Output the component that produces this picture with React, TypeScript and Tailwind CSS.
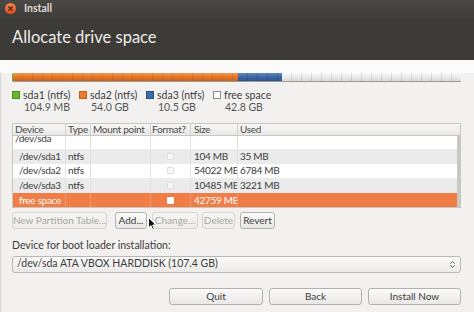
import { ChevronsUpDown, X } from "lucide-react";

const FONT = "font-['Lato','Noto_Sans',sans-serif]";

const legend = [
  { name: "sda1 (ntfs)", size: "104.9 MB", swatch: "bg-[#66b82f] border-[#4d8f20]" },
  { name: "sda2 (ntfs)", size: "54.0 GB", swatch: "bg-[#ec7c2c] border-[#c45e16]" },
  { name: "sda3 (ntfs)", size: "10.5 GB", swatch: "bg-[#3d6aa8] border-[#2a4f82]" },
  { name: "free space", size: "42.8 GB", swatch: "bg-white border-[#8a8a8a]" },
];

const rows = [
  { device: "/dev/sda1", type: "ntfs", size: "104 MB", used: "35 MB" },
  { device: "/dev/sda2", type: "ntfs", size: "54022 MB", used: "6784 MB" },
  { device: "/dev/sda3", type: "ntfs", size: "10485 MB", used: "3221 MB" },
];

const Btn = ({
  label,
  disabled,
  className,
}: {
  label: string;
  disabled?: boolean;
  className: string;
}) => (
  <button
    type="button"
    className={[
      "flex h-[17px] shrink-0 items-center justify-center whitespace-nowrap rounded-[3px] border bg-gradient-to-b text-[10px]",
      disabled
        ? "border-[#d6d4d2] from-[#f6f5f4] to-[#eeedec] text-[#a7a6a4]"
        : "border-[#b4b2af] from-[#fbfbfa] to-[#e8e7e5] text-[#3c3c3c]",
      className,
    ].join(" ")}
  >
    {label}
  </button>
);

const Cells = ({
  cols,
  line,
  align = "items-center",
}: {
  cols: React.ReactNode[];
  line: string;
  align?: string;
}) => {
  const widths = ["w-[53px]", "w-[25px]", "w-[60px]", "w-[40px]", "w-[47px]", "flex-1"];
  return (
    <>
      {cols.map((c, i) => (
        <div
          key={i}
          className={[
            "flex h-full shrink-0 overflow-hidden whitespace-nowrap",
            align,
            widths[i],
            i < 5 ? `border-r ${line}` : "",
          ].join(" ")}
        >
          {c}
        </div>
      ))}
    </>
  );
};

const Check = ({ on }: { on?: boolean }) => (
  <span className="flex w-full justify-center">
    {on ? (
      <span className="h-[7px] w-[7px] rounded-[1px] bg-white" />
    ) : (
      <span className="h-[7px] w-[7px] rounded-[1px] border border-[#e0dfdd] bg-[#f7f7f7]" />
    )}
  </span>
);

export default function App() {
  return (
    <div className={`h-[312px] w-[474px] overflow-hidden bg-[#fbfbfb] ${FONT}`}>
      {/* title bar */}
      <div className="flex h-[17px] items-center bg-gradient-to-b from-[#4a4945] to-[#3e3d39] pl-[5px]">
        <div className="flex h-[11px] w-[11px] items-center justify-center rounded-full bg-gradient-to-b from-[#f7864f] to-[#df4c13]">
          <X className="h-[7px] w-[7px] text-[#4a2a1a]" strokeWidth={4} />
        </div>
        <span className="ml-[8px] text-[10.5px] font-bold text-[#dfdbd2]">Install</span>
      </div>

      {/* header */}
      <div className="flex h-[43px] items-center bg-[#3c3b37] pl-[12px]">
        <h1 className="-mt-[3px] text-[16.5px] leading-none text-[#eeece8]">Allocate drive space</h1>
      </div>

      {/* body */}
      <div className="h-[248px] border-l border-[#d8d6d3] bg-[#f2f1f0] pl-[11px] pr-[13px]">
        {/* partition bar */}
        <div className="mt-[13px] flex h-[9px] w-[449px] overflow-hidden rounded-[1px] border-b border-[#9c9a97]">
          <div className="w-[1px] bg-[#66b82f]" />
          <div className="w-[225px] bg-[linear-gradient(180deg,#f39a55_0%,#e5792c_45%,#c9611c_100%)]">
            <div className="h-full w-full bg-[repeating-linear-gradient(90deg,transparent_0_9px,rgba(120,50,0,0.18)_9px_10px)]" />
          </div>
          <div className="w-[44px] bg-[linear-gradient(180deg,#5f8ac2_0%,#3e6aa6_45%,#2d5289_100%)]">
            <div className="h-full w-full bg-[repeating-linear-gradient(90deg,transparent_0_9px,rgba(0,20,60,0.2)_9px_10px)]" />
          </div>
          <div className="flex-1 bg-[linear-gradient(180deg,#fafafa_0%,#ececec_50%,#d8d8d8_100%)]">
            <div className="h-full w-full bg-[repeating-linear-gradient(90deg,transparent_0_9px,rgba(0,0,0,0.1)_9px_10px)]" />
          </div>
        </div>

        {/* legend */}
        <div className="mt-[7px] flex h-[26px] text-[10.5px] leading-[12px] text-[#3c3c3c]">
          {legend.map((l, i) => (
            <div key={l.name} className={["flex whitespace-nowrap", i < 3 ? "w-[67px]" : ""].join(" ")}>
              <div className={`mt-[2px] h-[8px] w-[8px] border ${l.swatch}`} />
              <div className="ml-[3px]">
                <div>{l.name}</div>
                <div className="pl-[1px] text-[#555]">{l.size}</div>
              </div>
            </div>
          ))}
        </div>

        {/* partition table */}
        <div className="mt-[8px] w-[449px] border border-[#c8c6c3] bg-white text-[10px] tracking-[-0.3px] text-[#3c3c3c]">
          <div className="flex h-[12px] border-b border-[#c8c6c3] bg-gradient-to-b from-[#f7f7f6] to-[#e9e8e7] text-[#4a4a4a]">
            <Cells
              line="border-[#d2d0cd]"
              cols={[
                <span className="pl-[2px]">Device</span>,
                <span className="pl-[2px]">Type</span>,
                <span className="pl-[2px]">Mount point</span>,
                <span className="pl-[1px]">Format?</span>,
                <span className="pl-[3px]">Size</span>,
                <span className="pl-[2px]">Used</span>,
              ]}
            />
          </div>
          <div className="relative h-[71px] overflow-hidden">
            {/* /dev/sda row, scrolled partly under the header */}
            <div className="flex h-[13px] bg-white">
              <Cells
                line="border-[#e3e1de]"
                align="items-start"
                cols={[
                  <span className="-mt-[5px] pl-[2px]">/dev/sda</span>,
                  <span />,
                  <span />,
                  <span />,
                  <span />,
                  <span />,
                ]}
              />
            </div>
            {rows.map((r, i) => (
              <div
                key={r.device}
                className={["flex h-[14.5px]", i % 2 === 0 ? "bg-[#ebebeb]" : "bg-white"].join(" ")}
              >
                <Cells
                  line="border-[#e3e1de]"
                  cols={[
                    <span className="pl-[6px]">{r.device}</span>,
                    <span className="pl-[2px]">{r.type}</span>,
                    <span />,
                    <Check />,
                    <span className="pl-[3px]">{r.size}</span>,
                    <span className="pl-[2px]">{r.used}</span>,
                  ]}
                />
              </div>
            ))}
            <div className="flex h-[15px] bg-[#ef7d45] text-white">
              <Cells
                line="border-[#f09a6d]"
                cols={[
                  <span className="pl-[6px]">free space</span>,
                  <span />,
                  <span />,
                  <Check on />,
                  <span className="pl-[3px]">42759 MB</span>,
                  <span />,
                ]}
              />
            </div>
            <div className="absolute right-0 top-0 h-full w-[3px] bg-[#c9c8c6]" />
          </div>
        </div>

        {/* action buttons */}
        <div className="relative mt-[4px] flex h-[17px]">
          <Btn label="New Partition Table..." disabled className="w-[95px]" />
          <Btn label="Add..." className="ml-[8px] w-[32px]" />
          <Btn label="Change..." disabled className="ml-[5px] w-[46px]" />
          <Btn label="Delete" disabled className="ml-[4px] w-[33px]" />
          <Btn label="Revert" className="ml-[5px] w-[35px]" />
          <svg className="absolute left-[136px] top-[5px]" width="9" height="14" viewBox="0 0 9 14">
            <path d="M0.5 0.5 L0.5 11 L3 8.6 L4.8 12.8 L6.4 12.1 L4.7 8 L8 8 Z" fill="#111" stroke="#fff" strokeWidth="1" />
          </svg>
        </div>

        {/* boot loader */}
        <div className="mt-[9px] text-[10.5px] text-[#3c3c3c]">Device for boot loader installation:</div>
        <div className="mt-[2px] flex h-[17px] w-[449px] items-center justify-between rounded-[3px] border border-[#b9b7b4] bg-gradient-to-b from-[#fafaf9] to-[#ebeae9] pl-[4px] pr-[3px] text-[10.5px] text-[#3c3c3c]">
          <span>/dev/sda ATA VBOX HARDDISK (107.4 GB)</span>
          <ChevronsUpDown className="h-[9px] w-[9px] text-[#555]" strokeWidth={2.5} />
        </div>

        {/* navigation */}
        <div className="mt-[15px] flex w-[449px] justify-end gap-[6px]">
          <Btn label="Quit" className="w-[94px]" />
          <Btn label="Back" className="w-[93px]" />
          <Btn label="Install Now" className="w-[93px]" />
        </div>
      </div>
    </div>
  );
}
